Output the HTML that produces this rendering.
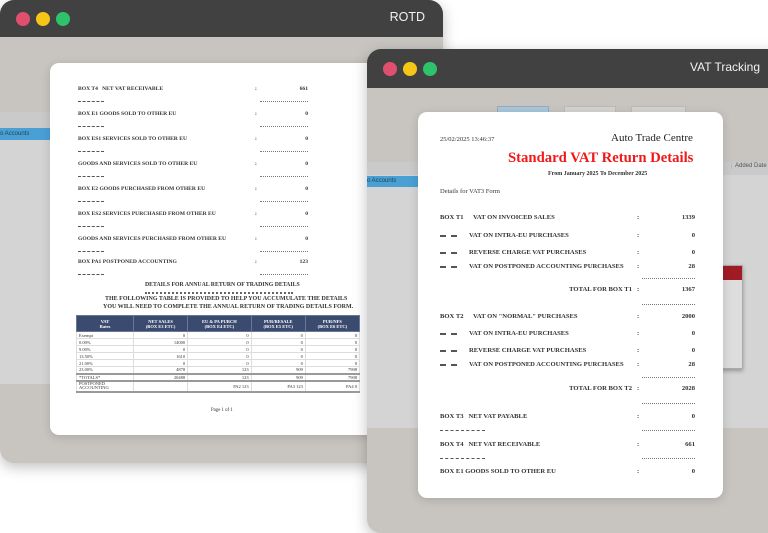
<!DOCTYPE html>
<html><head><style>
*{margin:0;padding:0;box-sizing:border-box}
body{width:768px;height:533px;background:#fff;position:relative;overflow:hidden;font-family:"Liberation Serif",serif}
.a{position:absolute;white-space:nowrap}
.win{position:absolute;border-radius:14px;overflow:hidden;background:#c8c5c0;box-shadow:0 4px 14px rgba(0,0,0,.25)}
.tb{position:absolute;left:0;right:0;top:0;background:#414141;color:#f2f2f2;font-family:"Liberation Sans",sans-serif}
.dot{position:absolute;width:14px;height:14px;border-radius:50%}
.paper{position:absolute;background:#fff;border-radius:9px;box-shadow:0 2px 10px rgba(0,0,0,.15)}
.t{font-weight:bold;color:#333;font-size:5.6px}
.r{font-weight:bold;color:#333;font-size:6.6px}
.dl{position:absolute;border-top:1px dotted #777;height:0}
table{border-collapse:collapse;font-size:4.5px;color:#333}
td{border:1px solid #ddd;padding:0 2px;height:7px;text-align:right}
th{background:#3b4b70;color:#fff;font-size:4.5px;height:16px;border:1px solid #6a7898}
</style></head><body>

<div class="win" style="left:0;top:0;width:443px;height:463px">
 <div class="tb" style="height:37px"><div class="a" style="right:18px;top:10px;font-size:12.5px">ROTD</div>
  <div class="dot" style="left:16px;top:12px;background:#e0506e"></div>
  <div class="dot" style="left:36px;top:12px;background:#f5c518"></div>
  <div class="dot" style="left:56px;top:12px;background:#2ec26a"></div></div>
 <div class="a" style="left:0;top:112px;width:443px;height:272px;background:#d4d4d4;border-top:1px solid #bbb"></div>
 <div class="a" style="left:0;top:112px;width:443px;height:16px;background:#cacaca"></div>
 <div class="a" style="left:0;top:128px;width:52px;height:12px;background:#4a9fd4;color:#245;font-family:'Liberation Sans',sans-serif;font-size:6px;line-height:12px">o Accounts</div>
 <div class="paper" style="left:50px;top:63px;width:380px;height:372px"></div>
</div>

<div class="a" style="left:0;top:0">
<div class="a t" style="left:78px;top:86px">BOX T4 &nbsp;&nbsp;NET VAT RECEIVABLE</div>
<div class="a t" style="left:78px;top:111px">BOX E1 GOODS SOLD TO OTHER EU</div>
<div class="a t" style="left:78px;top:136px">BOX ES1 SERVICES SOLD TO OTHER EU</div>
<div class="a t" style="left:78px;top:161px">GOODS AND SERVICES SOLD TO OTHER EU</div>
<div class="a t" style="left:78px;top:186px">BOX E2 GOODS PURCHASED FROM OTHER EU</div>
<div class="a t" style="left:78px;top:211px">BOX ES2 SERVICES PURCHASED FROM OTHER EU</div>
<div class="a t" style="left:78px;top:236px">GOODS AND SERVICES PURCHASED FROM OTHER EU</div>
<div class="a t" style="left:78px;top:259px">BOX PA1 POSTPONED ACCOUNTING</div>
</div>
<div id="lpx"></div>

<div class="win" style="left:367px;top:49px;width:420px;height:484px;border-radius:14px 0 0 14px">
 <div class="tb" style="height:39px"><div class="a" style="left:323px;top:11px;font-size:12px">VAT Tracking</div>
  <div class="dot" style="left:16px;top:13px;background:#e0506e"></div>
  <div class="dot" style="left:36px;top:13px;background:#f5c518"></div>
  <div class="dot" style="left:56px;top:13px;background:#2ec26a"></div></div>
 <div class="a" style="left:130px;top:57px;width:52px;height:12px;background:#a9c7dc;border:1px solid #9ab"></div>
 <div class="a" style="left:197px;top:57px;width:52px;height:12px;background:#d6d4d0;border:1px solid #bbb"></div>
 <div class="a" style="left:264px;top:57px;width:55px;height:12px;background:#d6d4d0;border:1px solid #bbb"></div>
 <div class="a" style="left:0;top:113px;width:420px;height:266px;background:#d4d4d4;border-top:1px solid #bbb"></div>
 <div class="a" style="left:0;top:113px;width:420px;height:13px;background:#cacaca"></div>
 <div class="a" style="left:364px;top:114px;font-family:'Liberation Sans',sans-serif;font-size:6px;color:#555;border-left:1px solid #bbb;padding-left:3px">Added Date</div>
 <div class="a" style="left:0;top:127px;width:58px;height:11px;background:#4a9fd4;color:#245;font-family:'Liberation Sans',sans-serif;font-size:6px;line-height:11px">o Accounts</div>
 <div class="a" style="left:332px;top:216px;width:44px;height:104px;background:#ddd;border:1px solid #aaa;box-shadow:0 2px 4px rgba(0,0,0,.3)"><div style="height:14px;background:#a01c24"></div></div>
 <div class="paper" style="left:51px;top:63px;width:305px;height:386px"></div>
</div>

<div class="a" style="left:440px;top:136px;font-size:6.5px;color:#333">25/02/2025 13:46:37</div>
<div class="a" style="left:611px;top:132px;font-size:11px;color:#222">Auto Trade Centre</div>
<div class="a" style="left:508px;top:150px;font-size:14.7px;font-weight:bold;color:#f01818">Standard VAT Return Details</div>
<div class="a" style="left:548px;top:171px;font-size:6px;font-weight:bold;color:#333">From January 2025 To December 2025</div>
<div class="a" style="left:440px;top:188px;font-size:6.5px;color:#333">Details for VAT3 Form</div>

<div id="rp"></div>

<script>
var h='';
var ly=[89,114,139,164,189,214,239,262],lv=['661','0','0','0','0','0','0','123'];
ly.forEach(function(y,i){h+='<div class="a t" style="left:255px;top:'+(y-3)+'px">:</div><div class="a t" style="left:270px;width:38px;text-align:right;top:'+(y-3)+'px">'+lv[i]+'</div>';
h+='<div class="a" style="left:78px;top:'+(y+12)+'px;width:26px;border-top:1px dashed #555"></div><div class="dl" style="left:260px;width:48px;top:'+(y+12)+'px"></div>';});
h+='<div class="a t" style="left:145px;top:282px;font-size:5.8px">DETAILS FOR ANNUAL RETURN OF TRADING DETAILS</div>';
h+='<div class="a" style="left:145px;top:292px;width:148px;border-top:2px dotted #666"></div>';
h+='<div class="a t" style="left:105px;top:296px;font-size:6px">THE FOLLOWING TABLE IS PROVIDED TO HELP YOU ACCUMULATE THE DETAILS</div>';
h+='<div class="a t" style="left:103px;top:304px;font-size:6px">YOU WILL NEED TO COMPLETE THE ANNUAL RETURN OF TRADING DETAILS FORM.</div>';
var rows=[['Exempt','0','0','0','0'],['0.00%','14000','0','0','0'],['9.00%','0','0','0','0'],['13.50%','1610','0','0','0'],['21.00%','0','0','0','0'],['23.00%','4878','123','909','7908']];
var t='<table class="a" style="left:76px;top:315px;width:284px"><tr><th style="width:57px">VAT<br>Rates</th><th>NET SALES<br>(BOX E3 ETC)</th><th>EU &amp; PA PURCH<br>(BOX E4 ETC)</th><th>PUR/RESALE<br>(BOX E5 ETC)</th><th>PUR/NFS<br>(BOX E6 ETC)</th></tr>';
rows.forEach(function(r){t+='<tr><td style="text-align:left">'+r[0]+'</td><td>'+r[1]+'</td><td>'+r[2]+'</td><td>'+r[3]+'</td><td>'+r[4]+'</td></tr>'});
var b='border-top:2px solid #999;';
t+='<tr><td style="text-align:left;'+b+'">*TOTALS*</td><td style="'+b+'">20488</td><td style="'+b+'">123</td><td style="'+b+'">909</td><td style="'+b+'">7908</td></tr>';
var c=b+'border-bottom:2px solid #999;';
t+='<tr><td style="text-align:left;line-height:4px;height:11px;'+c+'">POSTPONED<br>ACCOUNTING</td><td style="'+c+'"></td><td style="'+c+'">PA2 123</td><td style="'+c+'">PA3 123</td><td style="'+c+'">PA4 0</td></tr></table>';
h+=t;
h+='<div class="a" style="left:211px;top:408px;font-size:4.8px;color:#333">Page 1 of 1</div>';
function R(y,a,b,v,eq){
 if(eq){h+='<div class="a" style="left:440px;top:'+(y-1)+'px;width:17px;border-top:2px dashed #555"></div><div class="a r" style="left:469px;top:'+(y-4)+'px">'+b+'</div>';}
 else if(a){h+='<div class="a r" style="left:440px;top:'+(y-4)+'px">'+a+'</div><div class="a r" style="left:473px;top:'+(y-4)+'px">'+b+'</div>';}
 else h+='<div class="a r" style="left:520px;width:112px;text-align:right;top:'+(y-4)+'px">'+b+'</div>';
 h+='<div class="a r" style="left:637px;top:'+(y-4)+'px">:</div><div class="a r" style="left:655px;width:40px;text-align:right;top:'+(y-4)+'px">'+v+'</div>';}
function D(y){h+='<div class="dl" style="left:642px;width:53px;top:'+y+'px"></div>';}
R(218,'BOX T1','VAT ON INVOICED SALES','1339');
R(236,'','VAT ON INTRA-EU PURCHASES','0',1);
R(253,'','REVERSE CHARGE VAT PURCHASES','0',1);
R(267,'','VAT ON POSTPONED ACCOUNTING PURCHASES','28',1);
D(278);R(290,'','TOTAL FOR BOX T1','1367');D(304);
R(317,'BOX T2','VAT ON "NORMAL" PURCHASES','2000');
R(334,'','VAT ON INTRA-EU PURCHASES','0',1);
R(351,'','REVERSE CHARGE VAT PURCHASES','0',1);
R(365,'','VAT ON POSTPONED ACCOUNTING PURCHASES','28',1);
D(377);R(389,'','TOTAL FOR BOX T2','2028');D(403);
h+='<div class="a r" style="left:440px;top:413px">BOX T3 &nbsp;&nbsp;NET VAT PAYABLE</div><div class="a r" style="left:637px;top:413px">:</div><div class="a r" style="left:655px;width:40px;text-align:right;top:413px">0</div>';
h+='<div class="a" style="left:440px;top:430px;width:45px;border-top:1px dashed #555"></div>';D(430);
h+='<div class="a r" style="left:440px;top:441px">BOX T4 &nbsp;&nbsp;NET VAT RECEIVABLE</div><div class="a r" style="left:637px;top:441px">:</div><div class="a r" style="left:655px;width:40px;text-align:right;top:441px">661</div>';
h+='<div class="a" style="left:440px;top:458px;width:45px;border-top:1px dashed #555"></div>';D(458);
h+='<div class="a r" style="left:440px;top:468px">BOX E1 GOODS SOLD TO OTHER EU</div><div class="a r" style="left:637px;top:468px">:</div><div class="a r" style="left:655px;width:40px;text-align:right;top:468px">0</div>';
document.getElementById('rp').innerHTML=h;
</script>
</body></html>
